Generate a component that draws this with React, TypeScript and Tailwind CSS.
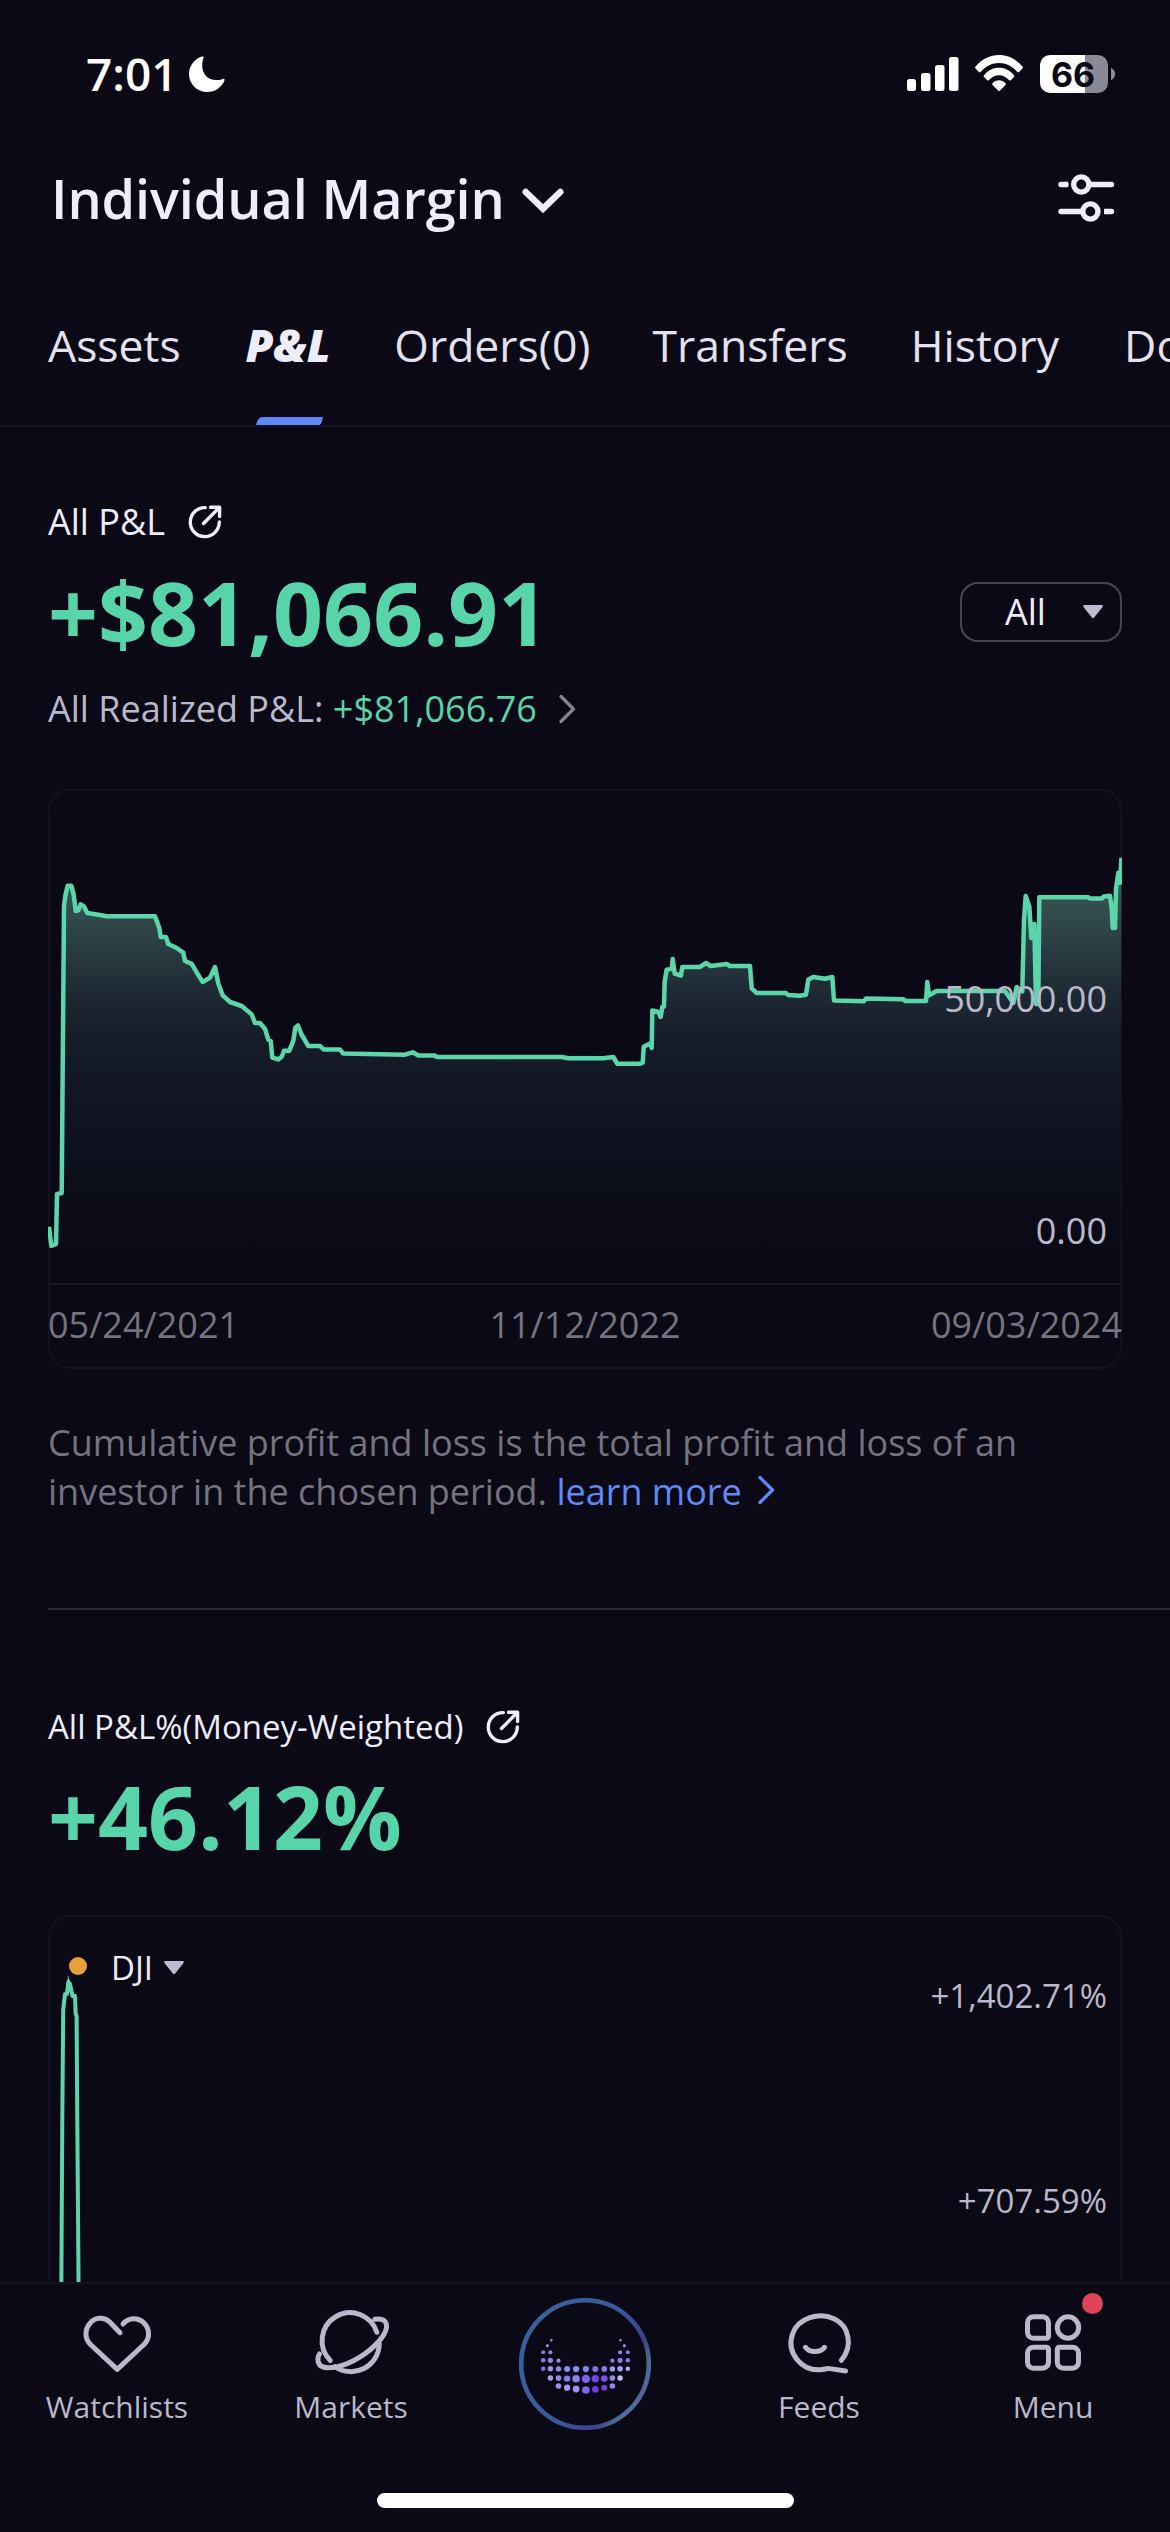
import React from "react";

const PNL_LINE =
  "49,1226.7 51.3,1246 56,1244 57,1194 61.7,1193 64,906.4 65.3,895.7 67.7,885.7 71.3,885.7 73.7,894.6 75.7,911 78.3,910.4 80.7,904.4 84,906.4 87.3,913 100,915 106.7,916.3 155,916.3 159.3,928 160.7,936.9 166,936.9 168.3,944 176.7,948 183.3,952.7 185,961 191.7,963.8 196.7,972.5 202.7,982 210,977.6 215,967 218.3,983.5 222.7,995.4 230,1002 241.7,1006 251.7,1014.4 255,1023 260,1023 265,1029 268.3,1039.7 270.7,1041 272.3,1057.5 278.3,1059.4 281.7,1056.7 284,1050.7 289.3,1050.7 293.3,1040.9 295.3,1027.8 298,1025.5 301.3,1034 308.3,1046 320,1046 324,1049.6 340,1049.6 343.3,1053.5 405,1054.7 412.7,1052.3 418.3,1055.5 435,1055.5 436.7,1057 561.7,1057 568.3,1058.3 603.3,1058.3 613.3,1057 617.3,1063.8 640,1063.8 642.7,1062.6 643.7,1046.8 650,1043.6 651.7,1048 652.3,1010.4 658.3,1012 660.7,1017 662.3,1007 664,1006.5 664.7,981.5 666.7,969.7 671.7,968.9 672.7,959 674.7,973.6 681,975.6 682.3,966.9 700,966.9 706,963 710.7,966 726.7,964 730,966 750,966 751.7,988.3 756.7,993 786,993 788,995 800,995.8 806,994.6 808.3,979.6 813.3,977 825,978.8 832.3,977 834,1000.5 864,1001.3 866,998.5 903.3,999.3 905.3,1001 926,1001 927.3,982 929,995.4 936.7,991 1005,991 1013.3,1003 1016.7,987 1022.3,991.4 1024,920 1025.7,896 1029.3,906.4 1031.3,938 1034.3,924 1036,1004 1038.3,1004 1039.3,897.3 1088.3,897.3 1090,898.5 1101.7,898.5 1104,896.5 1110,895.7 1111.7,908.4 1112.7,928 1115,928 1116,888.6 1118.3,872.8 1120,882.7 1121.5,857.8";

const INDEX_LINE =
  "61.3,2290 62.3,2120 63.2,2010 65,1994 67,1994 68.3,1982 70,1984 72.5,1996 75,1996 75.7,2014 76.6,2016 77.3,2120 78.6,2290";

const LOGO_DOTS: [number, number, number, string][] = [
  [-33.7, -23.7, 1.2, "#a99af0"], [35.5, -23.7, 1.2, "#a99af0"],
  [-37.6, -18.3, 1.6, "#9384ee"], [39.4, -18.3, 1.6, "#9384ee"],
  [-41.8, -11.7, 2, "#8a78ea"], [-34.6, -11.7, 2.1, "#8f80ee"],
  [35.1, -11.7, 2.1, "#8f80ee"], [42.8, -11.7, 2, "#8a78ea"],
  [-41.8, -3.7, 2.3, "#8878ea"], [-34.6, -3.7, 2.6, "#9687ee"], [-26.5, -3.3, 2.1, "#9a8cf0"],
  [27.4, -3.3, 2.1, "#8f7cf0"], [35.1, -3.7, 2.6, "#8a7cf4"], [42.8, -3.7, 2.3, "#8878ea"],
  [-41.8, 4.7, 2.2, "#8a68e6"], [-34.6, 4.7, 2.7, "#a78df0"], [-26.5, 4.9, 2.7, "#8f8af0"],
  [-17.9, 4.9, 3, "#8090ee"], [-8.9, 5, 3.1, "#8691ee"], [0.9, 5, 3.1, "#8088ee"],
  [10.3, 5, 3, "#8070f0"], [19.3, 5, 2.9, "#8a78ee"], [27.4, 4.9, 2.7, "#a096f4"],
  [35.1, 4.7, 2.8, "#a4a2f6"], [42.8, 4.7, 2.2, "#b4aef8"],
  [-34.6, 14, 2.7, "#ab98f0"], [-26.5, 14.1, 2.8, "#9388f0"], [-17.9, 14.6, 3.2, "#7d80ea"],
  [-8.9, 14.8, 3.7, "#8a84f2"], [0.9, 14.9, 4.2, "#7e60ee"], [10.3, 14.8, 3.7, "#7442e6"],
  [19.3, 14.6, 3.3, "#7c4fe6"], [27.4, 14.1, 2.8, "#9684ee"], [35.1, 14, 2.7, "#c4bcfa"],
  [-26.5, 22, 2.8, "#a090f0"], [-17.9, 23.7, 3.1, "#a49cf4"], [-8.9, 25, 3.4, "#9c92f4"],
  [0.9, 26, 3.8, "#8068ee"], [10.3, 25.3, 3.4, "#7038e6"], [19.3, 23.7, 3, "#6e44d8"],
  [27.4, 22, 2.8, "#9484ec"],
];

function StatusBar() {
  return (
    <div className="flex h-[148px] shrink-0 items-center justify-between pl-[86px] pr-[55px] text-white">
      <div className="flex items-center">
        <span className="-mt-[2px] w-[103px] text-[46px] font-semibold leading-[60px]">7:01</span>
        <svg className="h-[36px] w-[36px]" viewBox="0 0 36 36" fill="currentColor">
          <path d="M12 .8C4.500 3.800 0 10.500 0 18c0 10 8 18 18 18 8.500 0 14.800-4.800 17.400-11.500.5-1.400-.4-2-1.500-1.600-2 .8-4.300 1.200-6.700 1.200C18.700 24.100 13.200 18 13.200 9.500c0-2.700.4-5.200 1.200-7.200.6-1.500-.6-2.200-2.400-1.500Z" />
        </svg>
      </div>
      <svg className="h-[40px] w-[208px]" viewBox="907 54 208 40" fill="currentColor">
        <rect x="907" y="79" width="9" height="12" rx="2.500" />
        <rect x="921" y="73" width="9.500" height="18" rx="2.500" />
        <rect x="935" y="65" width="9.500" height="26" rx="2.500" />
        <rect x="949" y="57" width="9.500" height="34" rx="2.500" />
        <path d="M975.600 66.500C982 59 990 55 999 55s17 4 23.400 11.500c.7.800.7 1.300 0 2l-3 3.200c-.8.800-1.500.7-2.200 0C1012 66 1006 63 999 63s-13 3-18.200 8.700c-.7.700-1.400.8-2.200 0l-3-3.200c-.7-.7-.7-1.200 0-2Z" />
        <path d="M984 75.200c4-4.800 9-7.400 15-7.400s11 2.600 15 7.400c.5.600.5 1.200 0 1.800l-3 3c-.7.700-1.300.7-2 0-2.900-3-6-4.700-10-4.700s-7.100 1.700-10 4.700c-.7.700-1.300.7-2 0l-3-3c-.5-.6-.5-1.200 0-1.800Z" />
        <path d="M992.500 83.300c1.700-2 4-3.100 6.500-3.100s4.800 1.100 6.500 3.100c.5.600.5 1.100 0 1.700l-5.500 5.500c-.7.700-1.300.7-2 0l-5.500-5.500c-.5-.6-.5-1.100 0-1.700Z" />
        <path d="M1085 55h13a10 10 0 0 1 10 10v18a10 10 0 0 1-10 10h-13Z" fill="#8a8995" />
        <path d="M1085 55h-35a10 10 0 0 0-10 10v18a10 10 0 0 0 10 10h35Z" />
        <path d="M1111 68c5.500 2 5.500 10 0 12Z" fill="#8a8995" />
        <text x="1073" y="86.500" textAnchor="middle" fill="#0a0915" fontFamily="Inter" fontSize="34" fontWeight="700">66</text>
      </svg>
    </div>
  );
}

function Header() {
  return (
    <div className="flex h-[100px] shrink-0 items-center justify-between pl-[51px] pr-[55px]">
      <div className="flex items-center">
        <h1 className="w-[471px] whitespace-nowrap text-[54px] font-semibold leading-[72px] tracking-[-0.1px]">Individual Margin</h1>
        <svg className="mt-[6px] h-[26px] w-[42px]" viewBox="0 0 42 26" fill="none" stroke="currentColor" strokeWidth="6.500" strokeLinecap="round">
          <path d="M3.700 4 21 20.700 38.300 4" />
        </svg>
      </div>
      <svg className="h-[50px] w-[57px]" viewBox="1058 173 57 50" fill="none" stroke="currentColor" strokeWidth="5.400" strokeLinecap="round">
        <path d="M1061 184.500H1066" />
        <path d="M1068 184.500H1065" strokeLinecap="butt" />
        <path d="M1091 184.500H1111.500M1061 211.500H1080" />
        <path d="M1107 211.500H1111.500" />
        <path d="M1104 211.500H1108" strokeLinecap="butt" />
        <circle cx="1081.300" cy="184.500" r="7.600" />
        <circle cx="1090.400" cy="211.500" r="7.600" />
      </svg>
    </div>
  );
}

function Tabs() {
  return (
    <nav className="flex h-[179px] shrink-0 gap-[62px] overflow-hidden whitespace-nowrap border-b-2 border-[#15141f] pl-[48px] pt-[67px] text-[44.5px] leading-[60px] text-[#e4e2f1]">
      <span>Assets</span>
      <span className="relative ml-[3px] text-[45px] font-extrabold italic text-[#eeedfb]">
        P&amp;L
        <svg className="absolute left-[10px] top-[102px] h-[9px] w-[67px]" viewBox="0 0 67 9">
          <path d="M6 0H67C66 4 66 6 63 9H0C1 4 2 1 6 0Z" fill="#5f89fa" />
        </svg>
      </span>
      <span className="ml-[2px]">Orders(0)</span>
      <span>Transfers</span>
      <span className="ml-[1px]">History</span>
      <span className="ml-[3px]">Documents</span>
    </nav>
  );
}

function ShareIcon() {
  return (
    <svg className="h-[34px] w-[34px]" viewBox="0 0 34 34" fill="none" stroke="currentColor" strokeWidth="3.400" strokeLinecap="round" strokeLinejoin="round">
      <path d="M17.300 2.600A14.500 14.500 0 1 0 31.300 17" />
      <path d="M22.500 2.200H31.600V11.500M31 2.800 15.500 18.500" />
    </svg>
  );
}

function Caret() {
  return (
    <svg className="h-[14px] w-[20px]" viewBox="0 0 21 15" fill="#bdbbd0">
      <path d="M1.500 0H19.500C21 0 21.400 1.300 20.500 2.300L11.700 13.500Q10.500 15 9.300 13.500L.5 2.300C-.4 1.300 0 0 1.500 0Z" />
    </svg>
  );
}

function Chevron() {
  return (
    <svg className="h-[30px] w-[18px]" viewBox="0 0 18 30" fill="none" stroke="currentColor" strokeWidth="3.300" strokeLinecap="round" strokeLinejoin="round">
      <path d="M3 2.500 15.500 15 3 27.500" />
    </svg>
  );
}

function PnlChart() {
  return (
    <div className="relative mt-[60px] h-[580px] rounded-[22px] border-2 border-[#13121d]">
      <svg className="absolute -left-[2px] -top-[2px] h-[580px] w-[1074px]" viewBox="48 789 1074 580">
        <defs>
          <linearGradient id="pnlFill" gradientUnits="userSpaceOnUse" x1="0" y1="880" x2="0" y2="1250">
            <stop offset="0" stopColor="#3a5954" />
            <stop offset="0.14" stopColor="#2e4447" />
            <stop offset="0.3" stopColor="#1e2a34" />
            <stop offset="0.43" stopColor="#161c28" />
            <stop offset="0.7" stopColor="#0e121e" />
            <stop offset="1" stopColor="#0a0915" />
          </linearGradient>
        </defs>
        <polygon points={`48,1246 ${PNL_LINE} 1120.5,1246`} fill="url(#pnlFill)" />
        <polyline points={PNL_LINE} fill="none" stroke="#5bd5aa" strokeWidth="4.500" strokeLinejoin="round" />
      </svg>
      <div className="relative flex h-full flex-col text-[36px] leading-[48px]">
        <div className="flex h-[494px] flex-col items-end border-b-2 border-[#181722] pr-[13px] text-[#bab8cb]">
          <span className="mt-[184px]">50,000.00</span>
          <span className="mt-[184px]">0.00</span>
        </div>
        <div className="-mx-[2px] flex justify-between pt-[16px] text-[#75737f]">
          <span>05/24/2021</span>
          <span>11/12/2022</span>
          <span>09/03/2024</span>
        </div>
      </div>
    </div>
  );
}

function PercentChart() {
  return (
    <div className="relative mt-[58px] h-[600px] rounded-[22px] border-2 border-[#13121d]">
      <svg className="absolute -left-[2px] -top-[2px] h-[380px] w-[1074px]" viewBox="48 1915 1074 380">
        <polyline points={INDEX_LINE} fill="none" stroke="#5bd5aa" strokeWidth="4" strokeLinejoin="round" />
        <path d="M66.500 1990 68 1975 71 1985Z" fill="#5bd5aa" />
      </svg>
      <div className="relative flex justify-between pl-[19px] pr-[13px] pt-[28px] text-[33px] leading-[46px]">
        <div className="flex h-[46px] items-center">
          <span className="mt-[-4px] h-[18px] w-[18px] rounded-full bg-[#eb9f3a]" />
          <span className="ml-[24px] mr-[11px]">DJI</span>
          <Caret />
        </div>
        <div className="flex flex-col items-end pt-[28px] text-[#bab8cb]">
          <span>+1,402.71%</span>
          <span className="mt-[159px]">+707.59%</span>
        </div>
      </div>
    </div>
  );
}

function NavItem({ label, children }: { label: string; children: React.ReactNode }) {
  return (
    <div className="flex flex-1 flex-col items-center">
      {children}
      <span className="mt-[3px] text-[30px] leading-[40px]">{label}</span>
    </div>
  );
}

function BottomNav() {
  return (
    <div className="h-[250px] shrink-0 border-t-2 border-[#13121d]">
      <div className="flex pt-[20px] text-[#bab8cb]">
        <NavItem label="Watchlists">
          <svg className="h-[80px] w-[80px]" viewBox="77 2304 80 80" fill="none" stroke="currentColor" strokeWidth="5" strokeLinecap="round" strokeLinejoin="round">
            <path d="M120 2332.700 109.500 2321.800C103.500 2316.500 95 2317.500 90.300 2323 84.500 2329.300 84.500 2338 90 2344L117.200 2369.300 144.500 2344C150 2338 150 2329 144 2323 138.500 2317.300 128.500 2317 123 2324" />
          </svg>
        </NavItem>
        <NavItem label="Markets">
          <svg className="h-[80px] w-[80px]" viewBox="311 2304 80 80" fill="none" stroke="currentColor" strokeWidth="5" strokeLinecap="round" strokeLinejoin="round">
            <path d="M330.300 2360.500A28 28 0 1 1 376.800 2332.300" />
            <path d="M335 2366.700A28.300 28.300 0 0 0 379.300 2344" />
            <path d="M375 2319.300C380 2318.500 385 2319.500 386.300 2324 388.500 2332 378 2344 366 2353 350 2364.500 333 2370 323 2367 317 2365 317 2358 319.500 2354" />
          </svg>
        </NavItem>
        <div className="flex flex-1 justify-center">
          <svg className="-mt-[8px] h-[136px] w-[136px]" viewBox="-68 -68 136 136">
            <defs>
              <linearGradient id="ring" x1="0" y1="0.2" x2="1" y2="0.75">
                <stop offset="0" stopColor="#3a629c" />
                <stop offset="0.55" stopColor="#37589a" />
                <stop offset="0.78" stopColor="#403f8c" />
                <stop offset="0.9" stopColor="#4c7096" />
                <stop offset="1" stopColor="#5d5aa0" />
              </linearGradient>
            </defs>
            <circle r="63.800" fill="none" stroke="url(#ring)" strokeWidth="4.600" />
            {LOGO_DOTS.map(([x, y, r, color]) => (
              <circle key={`${x},${y}`} cx={x} cy={y} r={r} fill={color} />
            ))}
          </svg>
        </div>
        <NavItem label="Feeds">
          <svg className="h-[80px] w-[80px]" viewBox="779 2304 80 80" fill="none" stroke="currentColor" strokeWidth="5" strokeLinecap="round" strokeLinejoin="round">
            <path d="M841.300 2360.300C853.500 2346 849 2326 834.500 2319 819 2311.500 798 2318 792.500 2334 786 2353 802 2372 822 2369.600 825.500 2369 827 2368 830 2368.600L845.500 2371" />
            <path d="M805.500 2347.300C809.500 2353 820.500 2353 824.500 2347.300" />
          </svg>
        </NavItem>
        <NavItem label="Menu">
          <div className="relative h-[80px] w-[80px]">
            <svg className="h-[80px] w-[80px]" viewBox="1013 2304 80 80" fill="none" stroke="currentColor" strokeWidth="5">
              <path d="M1033.500 2316.800h9a6 6 0 0 1 6 6v13.500a2 2 0 0 1-2 2h-13a6 6 0 0 1-6-6v-9.500a6 6 0 0 1 6-6Z" />
              <circle cx="1068" cy="2327.500" r="10.700" />
              <path d="M1033.500 2347.200h13a2 2 0 0 1 2 2v13a6 6 0 0 1-6 6h-9a6 6 0 0 1-6-6v-9a6 6 0 0 1 6-6Z" />
              <path d="M1059.300 2347.200h13.200a6 6 0 0 1 6 6v9a6 6 0 0 1-6 6h-9.200a6 6 0 0 1-6-6v-13a2 2 0 0 1 2-2Z" />
            </svg>
            <span className="absolute -right-[10px] -top-[11px] h-[21px] w-[21px] rounded-full bg-[#dd4557]" />
          </div>
        </NavItem>
      </div>
      <div className="mx-auto mt-[61px] h-[15px] w-[417px] rounded-full bg-[#fcfcfe]" />
    </div>
  );
}

export default function App() {
  return (
    <div className="flex h-[2532px] w-[1170px] flex-col overflow-hidden bg-[#0a0915] font-['Open_Sans','Noto_Sans',sans-serif] text-[#eeedfb]">
      <StatusBar />
      <Header />
      <Tabs />
      <main className="min-h-0 flex-1 overflow-hidden">
        <section className="px-[48px] pt-[75px]">
          <div className="flex h-[40px] items-center gap-[23px] text-[36px] leading-[40px]">
            <span>All P&amp;L</span>
            <ShareIcon />
          </div>
          <div className="mt-[30px] flex h-[80px] items-center justify-between">
            <span className="text-[87.5px] font-bold leading-[80px] text-[#57d4aa]">+$81,066.91</span>
            <button className="flex h-[60px] w-[162px] items-center justify-between rounded-[18px] border-2 border-[#464552] pl-[43px] pr-[17px] text-[36px] leading-[40px]">
              <span>All</span>
              <Caret />
            </button>
          </div>
          <div className="mt-[37px] flex h-[40px] items-center text-[36px] leading-[40px] text-[#bab8cb]">
            <span className="whitespace-pre">All Realized P&amp;L: </span>
            <span className="mr-[21px] text-[#57d4aa]">+$81,066.76</span>
            <span className="flex text-[#85838f]"><Chevron /></span>
          </div>
          <PnlChart />
          <div className="mt-[49px] text-[36px] leading-[49px] text-[#75737f]">
            <p>Cumulative profit and loss is the total profit and loss of an</p>
            <p className="flex items-center">
              <span className="whitespace-pre">investor in the chosen period. </span>
              <span className="mr-[15px] text-[#5f89fa]">learn more</span>
              <span className="-mt-[4px] flex text-[#5f89fa]"><Chevron /></span>
            </p>
          </div>
        </section>
        <section className="ml-[48px] mt-[92px] border-t-2 border-[#2b2a35] pr-[48px] pt-[97px]">
          <div className="flex h-[40px] items-center gap-[23px] text-[33px] leading-[40px]">
            <span>All P&amp;L%(Money-Weighted)</span>
            <ShareIcon />
          </div>
          <div className="mt-[29px] h-[81px] text-[87.5px] font-bold leading-[80px] text-[#57d4aa]">+46.12%</div>
          <PercentChart />
        </section>
      </main>
      <BottomNav />
    </div>
  );
}
